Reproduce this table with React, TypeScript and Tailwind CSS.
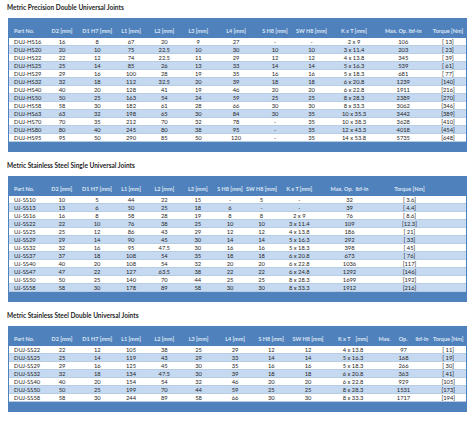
type Row = string[];

const t1Cols = "grid-cols-[35px_36px_34.5px_33px_33.5px_34.5px_41px_37px_36px_49px_49.5px_40px]";
const t2Cols = "grid-cols-[35px_35.5px_35px_33px_33.5px_33.5px_31px_32px_43.5px_57px_63px_27px]";
const t3Cols = "grid-cols-[35px_36px_34.5px_33px_33.5px_35px_38px_34.5px_39px_51px_50px_39.5px]";

const h1 = ["Part No.", "D2 [mm]", "D1 H7 [mm]", "L1 [mm]", "L2 [mm]", "L3 [mm]", "L4 [mm]", "S H8 [mm]", "SW H8 [mm]", "K x T [mm]", "Max. Op. lbf-in", "Torque [Nm]"];
const h2 = ["Part No.", "D2 [mm]", "D1 H7 [mm]", "L1 [mm]", "L2 [mm]", "L3 [mm]", "S H8 [mm]", "SW H8 [mm]", "K x T [mm]", "Max. Op.  lbf-in", "Torque [Nm]", ""];
const h3 = ["Part No.", "D2 [mm]", "D1 H7 [mm]", "L1 [mm]", "L2 [mm]", "L3 [mm]", "L4 [mm]", "S H8 [mm]", "SW H8 [mm]", "K x T    [mm]", "Max.      Op.      lbf-in", "Torque [Nm]"];

const r1: Row[] = [
  ["DUJ-HS16", "16", "8", "67", "20", "9", "27", "-", "-", "2 x 9", "106", "[ 13]"],
  ["DUJ-HS20", "20", "10", "75", "22.5", "10", "30", "10", "10", "3 x 11.4", "203", "[ 23]"],
  ["DUJ-HS22", "22", "12", "74", "22.5", "11", "29", "12", "12", "4 x 13.8", "345", "[ 39]"],
  ["DUJ-HS25", "25", "14", "85", "26", "13", "33", "14", "14", "5 x 16.3", "539", "[ 61]"],
  ["DUJ-HS29", "29", "16", "100", "28", "19", "35", "16", "16", "5 x 18.3", "681", "[ 77]"],
  ["DUJ-HS32", "32", "18", "112", "32.5", "20", "39", "18", "18", "6 x 20.8", "1239", "[140]"],
  ["DUJ-HS40", "40", "20", "128", "41", "19", "46", "20", "20", "6 x 22.8", "1911", "[216]"],
  ["DUJ-HS50", "50", "25", "163", "54", "24", "59", "25", "25", "8 x 28.3", "2389", "[270]"],
  ["DUJ-HS58", "58", "30", "182", "61", "28", "66", "30", "30", "8 x 33.3", "3062", "[346]"],
  ["DUJ-HS63", "63", "32", "198", "65", "30", "84", "30", "35", "10 x 35.3", "3442", "[389]"],
  ["DUJ-HS70", "70", "35", "212", "70", "32", "78", "-", "35", "10 x 38.3", "3628", "[410]"],
  ["DUJ-HS80", "80", "40", "245", "80", "38", "95", "-", "35", "12 x 43.3", "4018", "[454]"],
  ["DUJ-HS95", "95", "50", "290", "85", "50", "120", "-", "35", "14 x 53.8", "5735", "[648]"],
];

const r2: Row[] = [
  ["UJ-SS10", "10", "5", "44", "22", "15", "-", "5", "-", "32", "[ 3.6]", ""],
  ["UJ-SS13", "13", "6", "50", "25", "18", "6", "-", "-", "39", "[ 4.4]", ""],
  ["UJ-SS16", "16", "8", "58", "28", "19", "8", "8", "2 x 9", "76", "[ 8.6]", ""],
  ["UJ-SS22", "22", "10", "76", "38", "25", "10", "10", "3 x 11.4", "109", "[12.3]", ""],
  ["UJ-SS25", "25", "12", "86", "43", "29", "12", "12", "4 x 13.8", "186", "[ 21]", ""],
  ["UJ-SS29", "29", "14", "90", "45", "30", "14", "14", "5 x 16.3", "292", "[ 33]", ""],
  ["UJ-SS32", "32", "16", "95", "47.5", "30", "16", "16", "5 x 18.3", "398", "[ 45]", ""],
  ["UJ-SS37", "37", "18", "108", "54", "35", "18", "18", "6 x 20.8", "673", "[ 76]", ""],
  ["UJ-SS40", "40", "20", "108", "54", "32", "20", "20", "6 x 22.8", "1036", "[117]", ""],
  ["UJ-SS47", "47", "22", "127", "63.5", "38", "22", "22", "6 x 24.8", "1292", "[146]", ""],
  ["UJ-SS50", "50", "25", "140", "70", "44", "25", "25", "8 x 28.3", "1699", "[192]", ""],
  ["UJ-SS58", "58", "30", "178", "89", "58", "30", "30", "8 x 33.3", "1912", "[216]", ""],
];

const r3: Row[] = [
  ["DUJ-SS22", "22", "12", "105", "38", "25", "29", "12", "12", "4 x 13.8", "97", "[ 11]"],
  ["DUJ-SS25", "25", "14", "119", "43", "29", "33", "14", "14", "5 x 16.3", "168", "[ 19]"],
  ["DUJ-SS29", "29", "16", "125", "45", "30", "35", "16", "16", "5 x 18.3", "266", "[ 30]"],
  ["DUJ-SS32", "32", "18", "134", "47.5", "30", "39", "18", "18", "6 x 20.8", "363", "[ 41]"],
  ["DUJ-SS40", "40", "20", "154", "54", "32", "46", "20", "20", "6 x 22.8", "929", "[105]"],
  ["DUJ-SS50", "50", "25", "199", "70", "44", "59", "25", "25", "8 x 28.3", "1531", "[173]"],
  ["DUJ-SS58", "58", "30", "244", "89", "58", "66", "30", "30", "8 x 33.3", "1717", "[194]"],
];

function Table({ title, cols, head, rows }: { title: string; cols: string; head: string[]; rows: Row[] }) {
  return (
    <div className="flex flex-col">
      <div className="h-[10px] pl-[7px] text-[6.5px] leading-[10px] font-bold text-[#1f1f1f]">{title}</div>
      <div className="ml-[8px] mt-[5px] w-[459px] border-x border-[#4f81bd]">
        <div className={`grid ${cols} h-[20px] items-end bg-[#4f81bd] pb-[3px] text-[5.5px] leading-[7px] font-bold text-[#dce6f2]`}>
          {head.map((h, i) => (
            <div key={i} className={i === 0 ? "pl-[5px] whitespace-pre" : "text-center whitespace-pre"}>
              {h}
            </div>
          ))}
        </div>
        {rows.map((r, ri) => (
          <div
            key={ri}
            className={`grid ${cols} h-[8px] text-[5.8px] leading-[8px] text-[#262626] border-b border-[#b8cce4] ${ri % 2 ? "bg-[#c5d9f1]" : "bg-white"}`}
          >
            {r.map((c, ci) => (
              <div key={ci} className={ci === 0 ? "pl-[5px] whitespace-pre" : "text-center whitespace-pre"}>
                {c}
              </div>
            ))}
          </div>
        ))}
        <div className="h-[10px] bg-[#4f81bd]" />
      </div>
    </div>
  );
}

export default function App() {
  return (
    <div className="flex h-[421px] w-[474px] flex-col gap-[9px] bg-white pt-[3px] font-['Lato',sans-serif]">
      <Table title="Metric Precision Double Universal Joints" cols={t1Cols} head={h1} rows={r1} />
      <Table title="Metric Stainless Steel Single Universal Joints" cols={t2Cols} head={h2} rows={r2} />
      <Table title="Metric Stainless Steel Double Universal Joints" cols={t3Cols} head={h3} rows={r3} />
    </div>
  );
}
